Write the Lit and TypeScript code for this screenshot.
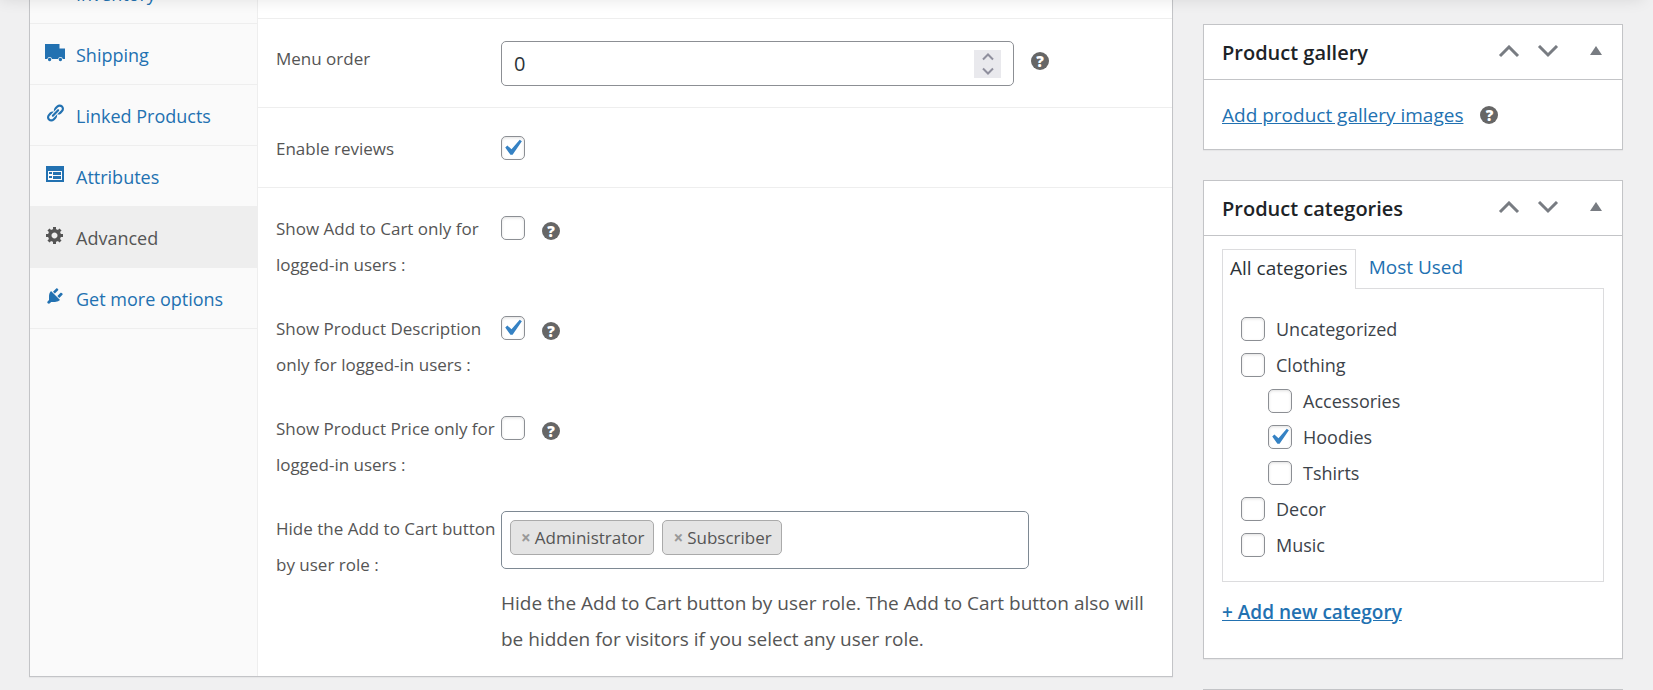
import { LitElement, html, css, svg, nothing } from "lit";
import { customElement, property, state } from "lit/decorators.js";
import { classMap } from "lit/directives/class-map.js";

const controls = css`
  :host, * { box-sizing: border-box; }
  a { color: #2271b1; }
  button { font: inherit; border: 0; padding: 0; background: none; cursor: pointer; }
  .check {
    appearance: none;
    flex: none;
    width: 24px;
    height: 24px;
    margin: 0;
    border: 1px solid #8c8f94;
    border-radius: 5px;
    background: #fff no-repeat -6px -5px / 32px 32px;
    box-shadow: inset 0 1px 3px rgba(0, 0, 0, 0.12);
  }
  .check:checked {
    background-image: url("data:image/svg+xml;utf8,<svg xmlns='http://www.w3.org/2000/svg' viewBox='0 0 20 20'><path d='M14.83 4.89l1.34.94-5.81 8.38H9.02L5.78 9.67l1.34-1.25 2.57 2.4z' fill='%233582c4'/></svg>");
  }
`;

const icons = {
  shipping: svg`<path fill-rule="evenodd" d="M0 2h14.500v4.500H20V17h-2.200a2.400 2.400 0 0 0-4.700 0H7a2.400 2.400 0 0 0-4.700 0H0zM4.600 15.800a1.700 1.700 0 1 1 0 3.400 1.700 1.700 0 0 1 0-3.400zM15.400 15.800a1.700 1.700 0 1 1 0 3.400 1.700 1.700 0 0 1 0-3.400z"/>`,
  linked: svg`<path d="M17.74 2.76c1.68 1.69 1.68 4.41 0 6.1l-1.53 1.52c-1.12 1.12-2.7 1.47-4.14 1.09l2.62-2.61.76-.77.76-.76c.84-.84.84-2.2 0-3.04-.84-.85-2.2-.85-3.04 0l-.77.76-3.38 3.38c-.37-1.44-.02-3.02 1.1-4.14l1.52-1.53c1.69-1.68 4.42-1.68 6.1 0zM8.59 13.43l5.34-5.34c.42-.42.42-1.1 0-1.52-.44-.43-1.13-.39-1.53 0l-5.33 5.34c-.42.42-.42 1.1 0 1.52.44.43 1.13.39 1.52 0zm-.76 2.29l4.14-4.15c.38 1.44.03 3.02-1.09 4.14l-1.52 1.53c-1.69 1.68-4.41 1.68-6.1 0-1.68-1.68-1.68-4.42 0-6.1l1.53-1.52c1.12-1.12 2.7-1.47 4.14-1.1l-4.14 4.15c-.85.84-.85 2.2 0 3.05.84.84 2.2.84 3.04 0z"/>`,
  attributes: svg`<path fill-rule="evenodd" d="M1 2h18v16H1zM3 7v9h14V7zM4 8h3v2H4zM8 8h8v3H8zM4 12h3v2H4zM8 12h8v3H8z"/>`,
  advanced: svg`<path d="M18 12h-2.18c-.17.7-.44 1.35-.81 1.93l1.54 1.54-2.1 2.1-1.54-1.54c-.58.36-1.23.63-1.91.79V19H8v-2.18c-.68-.16-1.33-.43-1.91-.79l-1.54 1.54-2.12-2.12 1.54-1.54c-.36-.58-.63-1.23-.79-1.91H1V9.03h2.17c.16-.7.44-1.35.8-1.94L2.43 5.55l2.1-2.1 1.54 1.54c.58-.37 1.24-.64 1.93-.81V2h3v2.18c.68.16 1.33.43 1.91.79l1.54-1.54 2.12 2.12-1.54 1.54c.36.59.64 1.24.8 1.94H18V12zm-8.5 1.5c1.66 0 3-1.34 3-3s-1.34-3-3-3-3 1.34-3 3 1.34 3 3 3z"/>`,
  options: svg`<path d="M13.11 4.36L9.87 7.6 8 5.73l3.24-3.24c.35-.34 1.05-.2 1.56.32.52.51.66 1.21.31 1.55zm-8 1.77l.91-1.12 9.01 9.01-1.19.84c-.71.71-2.63 1.16-3.82 1.16H6.14L4.9 17.26c-.59.59-1.54.59-2.12 0-.59-.58-.59-1.53 0-2.12l1.24-1.24v-3.88c0-1.13.4-3.19 1.09-3.89zm7.26 3.97l3.24-3.24c.34-.35 1.04-.21 1.55.31.52.51.66 1.21.31 1.55l-3.24 3.25z"/>`,
};

@customElement("help-tip")
class HelpTip extends LitElement {
  static styles = css`
    :host { display: block; flex: none; }
    button {
      display: block;
      width: 18px;
      height: 18px;
      padding: 0;
      border: 0;
      border-radius: 50%;
      background: #666;
      color: #fff;
      font: 800 15px/18px "Open Sans", sans-serif;
      text-align: center;
      cursor: help;
    }
  `;
  render() {
    return html`<button type="button" aria-label="Help">?</button>`;
  }
}

@customElement("post-box")
class PostBox extends LitElement {
  @property() heading = "";
  static styles = [
    controls,
    css`
      :host {
        display: block;
        border: 1px solid #c3c4c7;
        background: #fff;
        box-shadow: 0 1px 1px rgba(0, 0, 0, 0.04);
      }
      .head {
        display: flex;
        align-items: center;
        height: 55px;
        padding: 0 20px 0 18px;
        border-bottom: 1px solid #c3c4c7;
      }
      h2 {
        flex: 1;
        margin: 0;
        padding-top: 2px;
        color: #1d2327;
        font-size: 20px;
        line-height: 28px;
        font-weight: 600;
      }
      .tools { display: flex; align-items: center; }
      .tools button { display: flex; }
      .tools button + button { margin-left: 17px; }
      .tools .toggle { margin: 0 0 4px; margin-left: 31px; }
      svg { fill: none; stroke: #787c82; stroke-width: 3; }
      .toggle svg { fill: #787c82; stroke: none; }
    `,
  ];
  render() {
    return html`
      <div class="head">
        <h2>${this.heading}</h2>
        <div class="tools">
          <button type="button" aria-label="Move up">
            <svg width="22" height="14" viewBox="0 0 22 14"><path d="M2 11l9-9 9 9" /></svg>
          </button>
          <button type="button" aria-label="Move down">
            <svg width="22" height="14" viewBox="0 0 22 14"><path d="M2 1l9 9 9-9" /></svg>
          </button>
          <button type="button" class="toggle" aria-label="Toggle panel">
            <svg width="12" height="9" viewBox="0 0 12 9"><path d="M6 0l6 9H0z" /></svg>
          </button>
        </div>
      </div>
      <slot></slot>
    `;
  }
}

type Tab = { id: string; label: string; icon?: keyof typeof icons };
type Category = { id: string; label: string; checked?: boolean; children?: Category[] };

@customElement("app-root")
class AppRoot extends LitElement {
  @state() private tab = "advanced";
  @state() private roles = ["Administrator", "Subscriber"];
  @state() private order = 0;

  private tabs: Tab[] = [
    { id: "inventory", label: "Inventory" },
    { id: "shipping", label: "Shipping", icon: "shipping" },
    { id: "linked", label: "Linked Products", icon: "linked" },
    { id: "attributes", label: "Attributes", icon: "attributes" },
    { id: "advanced", label: "Advanced", icon: "advanced" },
    { id: "options", label: "Get more options", icon: "options" },
  ];

  private visibility = [
    { id: "cart", label: "Show Add to Cart only for logged-in users :", checked: false },
    { id: "description", label: "Show Product Description only for logged-in users :", checked: true },
    { id: "price", label: "Show Product Price only for logged-in users :", checked: false },
  ];

  private categories: Category[] = [
    { id: "uncategorized", label: "Uncategorized" },
    {
      id: "clothing",
      label: "Clothing",
      children: [
        { id: "accessories", label: "Accessories" },
        { id: "hoodies", label: "Hoodies", checked: true },
        { id: "tshirts", label: "Tshirts" },
      ],
    },
    { id: "decor", label: "Decor" },
    { id: "music", label: "Music" },
  ];

  static styles = [
    controls,
    css`
      :host {
        display: block;
        position: relative;
        height: 100vh;
        overflow: hidden;
        background: #f0f0f1;
        color: #3c434a;
        font: 18px/36px "Open Sans", "Noto Sans", sans-serif;
      }
      .topbar {
        position: absolute;
        z-index: 1;
        inset: -20px 10px auto 0;
        height: 20px;
        box-shadow: 0 0 15px rgba(0, 0, 0, 0.1);
      }
      .page {
        display: grid;
        grid-template-columns: minmax(0, 1fr) 420px;
        align-items: start;
        gap: 30px;
        padding: 0 30px 0 29px;
      }
      .data {
        display: grid;
        grid-template-columns: 228px minmax(0, 1fr);
        margin-top: -38px;
        border: 1px solid #c3c4c7;
        background: #fff;
        box-shadow: 0 1px 1px rgba(0, 0, 0, 0.04);
      }
      ul { list-style: none; margin: 0; padding: 0; }
      .tabs { background: #fafafa; border-right: 1px solid #eee; }
      .tabs a {
        display: flex;
        align-items: center;
        gap: 11px;
        height: 61px;
        padding: 2px 15px 0;
        border-bottom: 1px solid #eee;
        text-decoration: none;
      }
      .tabs a.active { background: #eee; color: #555; }
      .tabs svg { width: 20px; height: 20px; margin-bottom: 6px; overflow: visible; fill: currentColor; }
      .tabs .blank { width: 20px; }
      .previous { height: 56px; border-bottom: 1px solid #eee; }
      .row {
        display: grid;
        grid-template-columns: 225px minmax(0, 1fr);
        align-items: start;
        padding: 0 19px 0 18px;
      }
      .row > label, .row > .label { color: #555; font-size: 17px; }
      .field { display: flex; align-items: flex-end; gap: 17px; padding-top: 5px; }
      .order { padding-top: 22px; padding-bottom: 21px; border-bottom: 1px solid #eee; }
      .order .field { align-items: flex-start; padding: 0; }
      .order help-tip { margin-top: 11px; }
      .reviews { padding-top: 23px; padding-bottom: 20px; border-bottom: 1px solid #eee; }
      .number {
        display: flex;
        align-items: center;
        flex: 0 1 513px;
        min-width: 0;
        height: 45px;
        padding: 0 12px;
        border: 1px solid #8c8f94;
        border-radius: 5px;
      }
      .number input {
        flex: 1;
        min-width: 0;
        padding: 0;
        border: 0;
        outline: 0;
        background: none;
        color: #2c3338;
        font: inherit;
        font-size: 20px;
        appearance: textfield;
      }
      .number input::-webkit-inner-spin-button { appearance: none; margin: 0; }
      .spin {
        display: grid;
        justify-items: center;
        width: 27px;
        height: 28px;
        background: #e9e9ed;
      }
      .spin button { display: flex; align-items: center; }
      .spin svg { fill: none; stroke: #8f8f9d; stroke-width: 2; }
      .visibility { display: grid; gap: 28px; padding: 23px 0 19px; }
      .roles {
        display: flex;
        align-items: flex-start;
        gap: 8px;
        max-width: 528px;
        height: 58px;
        padding: 8px;
        border: 1px solid #7e8993;
        border-radius: 5px;
      }
      .chip {
        display: flex;
        align-items: center;
        gap: 4px;
        height: 35px;
        padding: 0 9px 0 10px;
        border: 1px solid #aaa;
        border-radius: 5px;
        background: #e4e4e4;
        color: #555;
        font-size: 17px;
      }
      .chip button { color: #999; font-weight: 700; line-height: 33px; }
      .note { margin: 16px 0 0; color: #555; font-size: 19px; }
      .side { display: grid; gap: 30px; padding-top: 24px; }
      .gallery { display: flex; align-items: center; gap: 17px; height: 69px; padding: 0 18px; font-size: 19px; }
      .catbox { padding: 13px 18px 32px; }
      .cattabs { display: flex; font-size: 19px; }
      .cattabs a { padding: 0 13px; line-height: 37px; text-decoration: none; }
      .cattabs .current {
        height: 40px;
        margin-bottom: -1px;
        padding: 0 7px;
        border: 1px solid #dcdcde;
        border-bottom: 0;
        background: #fff;
        color: #2c3338;
      }
      .tree { padding: 22px 18px 18px; border: 1px solid #dcdcde; }
      .tree ul { padding-left: 27px; }
      .tree label { display: flex; align-items: center; gap: 11px; }
      .add {
        display: block;
        width: fit-content;
        margin-top: 16px;
        font-size: 19px;
        line-height: 28px;
        font-weight: 600;
      }
      .next { height: 80px; }
    `,
  ];

  private renderCategories(list: Category[]): unknown {
    return list.map(
      (c) => html`<li>
        <label for=${"cat-" + c.id}>
          <input class="check" type="checkbox" id=${"cat-" + c.id} .checked=${!!c.checked} />${c.label}
        </label>
        ${c.children ? html`<ul>${this.renderCategories(c.children)}</ul>` : nothing}
      </li>`
    );
  }

  render() {
    return html`
      <div class="topbar"></div>
      <div class="page">
        <section class="data">
          <ul class="tabs">
            ${this.tabs.map(
              (t) => html`<li>
                <a
                  href=${"#" + t.id}
                  class=${classMap({ active: t.id === this.tab })}
                  @click=${() => (this.tab = t.id)}
                  >${t.icon
                    ? html`<svg viewBox="0 0 20 20" aria-hidden="true">${icons[t.icon]}</svg>`
                    : html`<span class="blank"></span>`}${t.label}</a
                >
              </li>`
            )}
          </ul>
          <div class="panel">
            <div class="previous"></div>
            <div class="row order">
              <label for="order">Menu order</label>
              <div class="field">
                <div class="number">
                  <input id="order" type="number" .value=${String(this.order)} />
                  <div class="spin">
                    <button type="button" aria-label="Increase" @click=${() => this.order++}>
                      <svg width="12" height="8" viewBox="0 0 12 8"><path d="M1 6.500l5-5 5 5" /></svg>
                    </button>
                    <button type="button" aria-label="Decrease" @click=${() => this.order--}>
                      <svg width="12" height="8" viewBox="0 0 12 8"><path d="M1 1.500l5 5 5-5" /></svg>
                    </button>
                  </div>
                </div>
                <help-tip></help-tip>
              </div>
            </div>
            <div class="row reviews">
              <label for="reviews">Enable reviews</label>
              <div class="field"><input class="check" id="reviews" type="checkbox" checked /></div>
            </div>
            <div class="visibility">
              ${this.visibility.map(
                (v) => html`<div class="row">
                  <label for=${v.id}>${v.label}</label>
                  <div class="field">
                    <input class="check" id=${v.id} type="checkbox" .checked=${v.checked} />
                    <help-tip></help-tip>
                  </div>
                </div>`
              )}
              <div class="row">
                <div class="label" id="roles-label">Hide the Add to Cart button by user role :</div>
                <div>
                  <div class="roles" role="group" aria-labelledby="roles-label">
                    ${this.roles.map(
                      (r) => html`<span class="chip"
                        ><button
                          type="button"
                          aria-label=${"Remove " + r}
                          @click=${() => (this.roles = this.roles.filter((x) => x !== r))}
                        >×</button>${r}</span
                      >`
                    )}
                  </div>
                  <p class="note">
                    Hide the Add to Cart button by user role. The Add to Cart button also will be
                    hidden for visitors if you select any user role.
                  </p>
                </div>
              </div>
            </div>
          </div>
        </section>
        <aside class="side">
          <post-box heading="Product gallery">
            <div class="gallery">
              <a href="#gallery">Add product gallery images</a><help-tip></help-tip>
            </div>
          </post-box>
          <post-box heading="Product categories">
            <div class="catbox">
              <div class="cattabs">
                <a class="current" href="#all">All categories</a>
                <a href="#most-used">Most Used</a>
              </div>
              <ul class="tree">
                ${this.renderCategories(this.categories)}
              </ul>
              <a class="add" href="#add">+ Add new category</a>
            </div>
          </post-box>
          <post-box class="next"></post-box>
        </aside>
      </div>
    `;
  }
}
